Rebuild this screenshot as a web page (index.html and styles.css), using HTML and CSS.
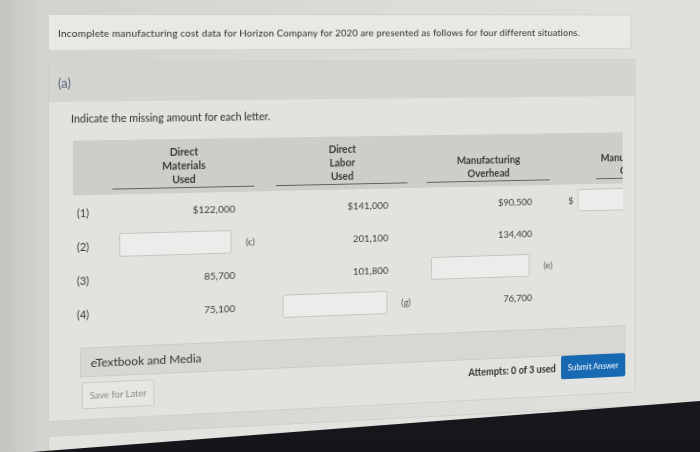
FILE: index.html
```html
<!DOCTYPE html>
<html lang="en">
<head>
    <meta charset="UTF-8">
    <meta name="viewport" content="width=device-width, initial-scale=1.0">
    <title>Horizon Company</title>
    <link rel="stylesheet" href="styles.css">
</head>
<body>
    <div class="screen">
        <div class="intro">Incomplete manufacturing cost data for Horizon Company for 2020 are presented as follows for four different situations.</div>

        <section class="part">
            <div class="part-head">(a)</div>
            <div class="part-body">
                <p class="prompt">Indicate the missing amount for each letter.</p>

                <div class="table-clip">
                    <div class="thead">
                        <div></div>
                        <div class="th">Direct<br>Materials<br>Used</div>
                        <div></div>
                        <div class="th">Direct<br>Labor<br>Used</div>
                        <div></div>
                        <div class="th">Manufacturing<br>Overhead</div>
                        <div></div>
                        <div class="th th-last">Manufacturing<br>Costs</div>
                    </div>

                    <div class="row">
                        <span class="label">(1)</span>
                        <span class="val">$122,000</span>
                        <span></span>
                        <span class="val">$141,000</span>
                        <span></span>
                        <span class="val">$90,500</span>
                        <span class="dollar">$</span>
                        <span class="cell"><input class="box box-wide" type="text"></span>
                    </div>
                    <div class="row">
                        <span class="label">(2)</span>
                        <span class="val"><input class="box box-dm" type="text"></span>
                        <span class="letter letter-c">(c)</span>
                        <span class="val">201,100</span>
                        <span></span>
                        <span class="val">134,400</span>
                        <span></span>
                        <span></span>
                    </div>
                    <div class="row">
                        <span class="label">(3)</span>
                        <span class="val">85,700</span>
                        <span></span>
                        <span class="val">101,800</span>
                        <span></span>
                        <span class="val"><input class="box box-moh" type="text"></span>
                        <span class="letter letter-e">(e)</span>
                        <span></span>
                    </div>
                    <div class="row">
                        <span class="label">(4)</span>
                        <span class="val">75,100</span>
                        <span></span>
                        <span class="val"><input class="box box-dl" type="text"></span>
                        <span class="letter letter-g">(g)</span>
                        <span class="val">76,700</span>
                        <span></span>
                        <span></span>
                    </div>
                </div>

                <div class="media">eTextbook and Media</div>

                <div class="actions">
                    <button class="save">Save for Later</button>
                    <div class="submit-wrap">
                        <span class="attempts">Attempts: 0 of 3 used</span>
                        <button class="submit">Submit Answer</button>
                    </div>
                </div>
            </div>
        </section>

        <section class="part part-next"></section>
    </div>

    <div class="desk"></div>
</body>
</html>
```

FILE: styles.css
```css
* {
    box-sizing: border-box;
}

body {
    margin: 0;
    width: 700px;
    height: 452px;
    overflow: hidden;
    font-family: 'Lato', 'Noto Sans', sans-serif;
    color: #333;
    background: linear-gradient(90deg, #c4c4c0 0%, #d2d2ce 6%, #dcdcd8 60%, #e0e0dc 100%);
}

/* photo of a screen: the page leans away to the right */
.screen {
    width: 770px;
    height: 540px;
    padding: 14px 0 0 48px;
    transform-origin: 48px 20px;
    transform: perspective(400px) rotateY(2.865deg);
}

.intro {
    width: 630px;
    height: 37px;
    display: flex;
    align-items: center;
    padding-left: 9px;
    font-size: 10.2px;
    letter-spacing: 0.2px;
    color: #2e2e2e;
    background-color: #e8e8e5;
    border: 1px solid #d1d1cd;
}

.part {
    width: 635px;
    margin-top: 11px;
    background-color: #e2e2de;
    border: 1px solid #cfcfcb;
}

.part-head {
    height: 39px;
    display: flex;
    align-items: center;
    padding-left: 9px;
    font-size: 13px;
    color: #56677c;
    background-color: #d4d4d0;
}

.part-body {
    padding: 10px 0 10px 22px;
}

.prompt {
    margin: 0;
    font-size: 10.9px;
    line-height: 14px;
    color: #2e2e2e;
}

.table-clip {
    width: 595px;
    margin: 15px 0 0 2px;
    overflow: hidden;
}

.thead {
    display: grid;
    grid-template-columns: 40px 147px 23px 142px 21px 138px 53px 82px;
    align-items: end;
    height: 55px;
    padding-bottom: 5px;
    background-color: #cdcdc9;
}

.th {
    text-align: center;
    font-size: 10.8px;
    font-weight: 700;
    line-height: 14px;
    color: #3a3a3a;
    padding-bottom: 1px;
    border-bottom: 1px solid #5e5e5e;
    white-space: nowrap;
}

.row {
    display: grid;
    grid-template-columns: 40px 128px 42px 122px 41px 119px 51px 100px;
    align-items: center;
    height: 34px;
    font-size: 10.4px;
    color: #3a3a3a;
}

.label {
    padding-left: 4px;
    font-size: 11px;
}

.val {
    display: flex;
    justify-content: flex-end;
    padding-right: 1px;
}

.letter {
    font-size: 10px;
    color: #555;
}

.letter-c {
    padding-left: 10px;
}

.letter-g {
    padding-left: 13px;
}

.letter-e {
    padding-left: 12px;
}

.dollar {
    text-align: right;
    padding-right: 5px;
    font-size: 10px;
}

.box {
    height: 24px;
    background-color: #ececea;
    border: 1px solid #c4c4c0;
    border-radius: 2px;
    outline: none;
}

.box-dm {
    width: 116px;
    margin-right: 4px;
}

.box-dl {
    width: 113px;
    margin-right: 1px;
}

.box-moh {
    width: 110px;
    margin-right: 3px;
}

.box-wide {
    width: 100px;
}

.media {
    width: 591px;
    height: 30px;
    margin: 17px 0 0 9px;
    display: flex;
    align-items: center;
    padding-left: 10px;
    font-size: 12.2px;
    color: #333;
    background-color: #d7d7d3;
    border: 1px solid #cbcbc7;
}

.actions {
    width: 591px;
    margin-left: 9px;
    display: flex;
    justify-content: space-between;
    align-items: flex-start;
}

.save {
    width: 74px;
    height: 27px;
    margin: 5px 0 0 2px;
    padding: 0;
    font-family: inherit;
    font-size: 9.6px;
    color: #8a8a8a;
    background-color: #e6e6e3;
    border: 1px solid #c9c9c5;
    border-radius: 2px;
}

.submit-wrap {
    display: flex;
    align-items: center;
    gap: 6px;
}

.attempts {
    font-size: 10.4px;
    font-weight: 700;
    color: #333;
}

.submit {
    width: 74px;
    height: 25px;
    padding: 0;
    font-family: inherit;
    font-size: 8.8px;
    color: #fff;
    background-color: #1769b2;
    border: none;
    border-radius: 2px;
}

.part-next {
    height: 90px;
    margin-top: 14px;
}

/* the dark desk edge along the bottom of the photo */
.desk {
    position: absolute;
    inset: 0;
    background: linear-gradient(180deg, #24272c 0%, #14161a 100%);
    clip-path: polygon(32px 452px, 700px 401px, 700px 452px);
}
```
